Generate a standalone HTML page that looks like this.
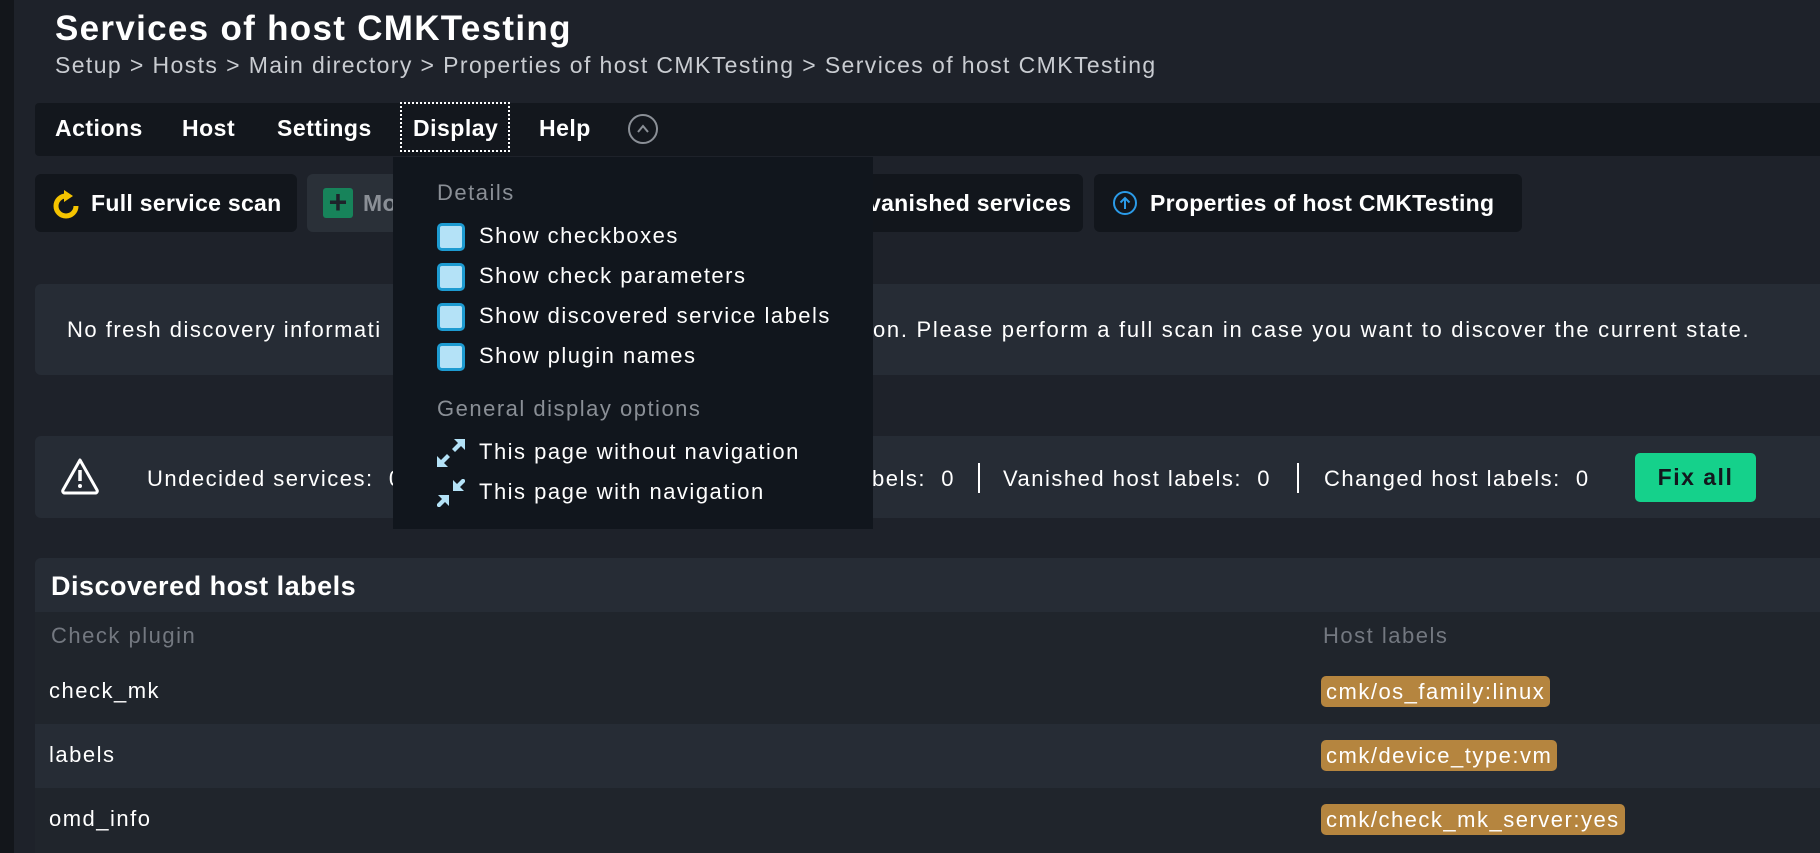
<!DOCTYPE html>
<html><head><meta charset="utf-8"><style>
*{margin:0;padding:0;box-sizing:border-box}
body{width:1820px;height:853px;overflow:hidden;background:#1e222a;font-family:"Liberation Sans",sans-serif;color:#fff;position:relative;letter-spacing:1.5px}
.a{position:absolute;white-space:nowrap}
.side{left:0;top:0;width:14px;height:853px;background:#13161b}
.panel{background:#262c35;border-radius:6px}
.btn{background:#12161c;border-radius:6px;font-weight:bold;font-size:23px;line-height:58px;letter-spacing:0.3px}
.cb{width:28px;height:28px;border:3px solid #1d9bd1;background:#b4e2f7;border-radius:5px}
.dd{font-size:22px}
.m{font-size:23px;font-weight:bold;letter-spacing:0.5px}
.chip{background:#b5853f;border-radius:5px;font-size:22px;height:31px;line-height:31px;padding:0 5px;color:#fff}
.sep{width:2px;height:30px;background:#fff}
</style></head><body>
<div class="a side"></div>
<div class="a" style="left:55px;top:9px;font-size:35px;font-weight:bold;letter-spacing:1.3px">Services of host CMKTesting</div>
<div class="a" style="left:55px;top:52px;font-size:23px;color:#c9ccd1;letter-spacing:1.4px">Setup &gt; Hosts &gt; Main directory &gt; Properties of host CMKTesting &gt; Services of host CMKTesting</div>

<div class="a" style="left:35px;top:103px;width:1785px;height:53px;background:#13171d;border-radius:4px 0 0 4px"></div>
<div class="a m" style="left:55px;top:115px">Actions</div>
<div class="a m" style="left:182px;top:115px">Host</div>
<div class="a m" style="left:277px;top:115px">Settings</div>
<div class="a" style="left:400px;top:102px;width:110px;height:50px;border:2px dotted #fff"></div>
<div class="a m" style="left:413px;top:115px">Display</div>
<div class="a m" style="left:539px;top:115px">Help</div>
<svg class="a" style="left:627px;top:113px" width="32" height="32"><circle cx="16" cy="16" r="14" fill="none" stroke="#8a8f96" stroke-width="2"/><path d="M11 19l5-6 5 6" fill="none" stroke="#8a8f96" stroke-width="2"/></svg>

<div class="a btn" style="left:35px;top:174px;width:262px;height:58px;padding-left:56px">Full service scan</div>
<svg class="a" style="left:52px;top:190px" width="28" height="30"><path d="M14 6a10 10 0 1 0 10 10" fill="none" stroke="#f5c400" stroke-width="5"/><path d="M12 0l9 6-9 6z" fill="#f5c400"/></svg>
<div class="a btn" style="left:307px;top:174px;width:100px;height:58px;background:#2a3038;padding-left:56px;color:#8a8f96">Mo</div>
<div class="a" style="left:323px;top:188px;width:30px;height:30px;background:#17835a;border-radius:3px;color:#1e222a;font-size:32px;font-weight:bold;line-height:28px;text-align:center;letter-spacing:0">+</div>
<div class="a btn" style="left:860px;top:174px;width:223px;height:58px;padding-left:8px">vanished services</div>
<div class="a btn" style="left:1094px;top:174px;width:428px;height:58px;padding-left:56px">Properties of host CMKTesting</div>
<svg class="a" style="left:1112px;top:190px" width="26" height="26"><circle cx="13" cy="13" r="11" fill="none" stroke="#2b9be8" stroke-width="2"/><path d="M13 19V8M8.5 12.5L13 8l4.5 4.5" fill="none" stroke="#2b9be8" stroke-width="2"/></svg>

<div class="a panel" style="left:35px;top:284px;width:1800px;height:91px"></div>
<div class="a" style="left:67px;top:317px;font-size:22px">No fresh discovery informati</div>
<div class="a" style="left:873px;top:317px;font-size:22px;letter-spacing:1.7px">on. Please perform a full scan in case you want to discover the current state.</div>

<div class="a panel" style="left:35px;top:436px;width:1800px;height:82px"></div>
<svg class="a" style="left:60px;top:457px" width="40" height="38"><path d="M20 3L37 33a2 2 0 0 1-2 3H5a2 2 0 0 1-2-3z" fill="none" stroke="#fff" stroke-width="3" stroke-linejoin="round"/><path d="M20 13v11" stroke="#fff" stroke-width="3.5"/><circle cx="20" cy="29" r="2" fill="#fff"/></svg>
<div class="a" style="left:147px;top:466px;font-size:22px">Undecided services:&nbsp; 0</div>
<div class="a" style="left:872px;top:466px;font-size:22px">bels:&nbsp; 0</div>
<div class="a sep" style="left:978px;top:463px"></div>
<div class="a" style="left:1003px;top:466px;font-size:22px">Vanished host labels:&nbsp; 0</div>
<div class="a sep" style="left:1297px;top:463px"></div>
<div class="a" style="left:1324px;top:466px;font-size:22px">Changed host labels:&nbsp; 0</div>
<div class="a" style="left:1635px;top:453px;width:121px;height:49px;background:#15d18b;border-radius:5px;color:#13171d;font-weight:bold;font-size:23px;text-align:center;line-height:49px;letter-spacing:1.5px">Fix all</div>

<div class="a" style="left:35px;top:558px;width:1785px;height:54px;background:#262c35;border-radius:6px 0 0 0"></div>
<div class="a" style="left:51px;top:571px;font-size:27px;font-weight:bold;letter-spacing:0.5px">Discovered host labels</div>
<div class="a" style="left:35px;top:612px;width:1785px;height:50px;background:#20252c"></div>
<div class="a" style="left:51px;top:623px;font-size:22px;color:#737880">Check plugin</div>
<div class="a" style="left:1323px;top:623px;font-size:22px;color:#737880">Host labels</div>
<div class="a" style="left:35px;top:662px;width:1785px;height:62px;background:#20252c"></div>
<div class="a" style="left:35px;top:724px;width:1785px;height:64px;background:#262c35"></div>
<div class="a" style="left:35px;top:788px;width:1785px;height:65px;background:#20252c"></div>
<div class="a" style="left:49px;top:678px;font-size:22px">check_mk</div>
<div class="a chip" style="left:1321px;top:676px">cmk/os_family:linux</div>
<div class="a" style="left:49px;top:742px;font-size:22px">labels</div>
<div class="a chip" style="left:1321px;top:740px">cmk/device_type:vm</div>
<div class="a" style="left:49px;top:806px;font-size:22px">omd_info</div>
<div class="a chip" style="left:1321px;top:804px">cmk/check_mk_server:yes</div>

<div class="a" style="left:393px;top:157px;width:480px;height:372px;background:#11161d"></div>
<div class="a dd" style="left:437px;top:180px;color:#8a8f96">Details</div>
<div class="a cb" style="left:437px;top:223px"></div><div class="a dd" style="left:479px;top:223px">Show checkboxes</div>
<div class="a cb" style="left:437px;top:263px"></div><div class="a dd" style="left:479px;top:263px">Show check parameters</div>
<div class="a cb" style="left:437px;top:303px"></div><div class="a dd" style="left:479px;top:303px">Show discovered service labels</div>
<div class="a cb" style="left:437px;top:343px"></div><div class="a dd" style="left:479px;top:343px">Show plugin names</div>
<div class="a dd" style="left:437px;top:396px;color:#8a8f96">General display options</div>
<svg class="a" style="left:437px;top:439px" width="28" height="28"><path d="M28 0v11l-4-4-6 6-3-3 6-6-4-4zM0 28V17l4 4 6-6 3 3-6 6 4 4z" fill="#b4e2f7"/></svg>
<div class="a dd" style="left:479px;top:439px">This page without navigation</div>
<svg class="a" style="left:437px;top:479px" width="28" height="28"><path d="M16 12V1l4 4 6-6 3 3-6 6 4 4zM12 16v11l-4-4-6 6-3-3 6-6-4-4z" fill="#b4e2f7"/></svg>
<div class="a dd" style="left:479px;top:479px">This page with navigation</div>
</body></html>
